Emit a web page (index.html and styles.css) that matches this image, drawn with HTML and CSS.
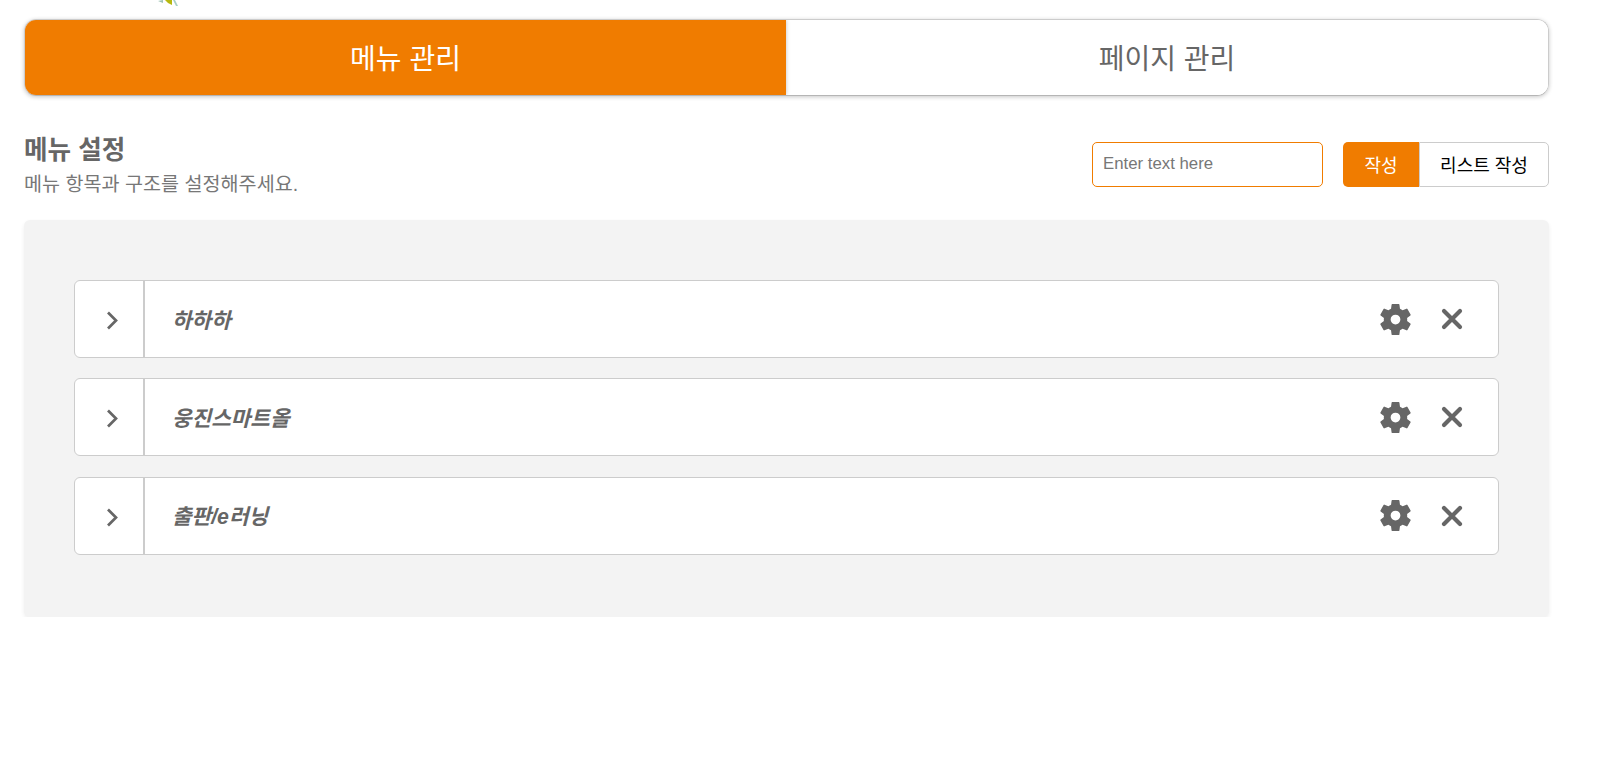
FILE: index.html
```html
<!DOCTYPE html>
<html lang="ko">
<head>
<meta charset="utf-8">
<title>메뉴 관리</title>
<link rel="stylesheet" href="styles.css">
</head>
<body>
<div class="page">
  <div class="logo-strip">
    <svg class="logo-bit" width="26" height="7" viewBox="0 0 26 7">
      <path d="M0 1 L5 0 L5 3 Z" fill="#9fc4b4"/>
      <path d="M7 0 H14 L14 5 L10 3 Z" fill="#b7b80f"/>
      <path d="M15 0 H17 L20 6 L18 6 Z" fill="#a9cfc5"/>
    </svg>
  </div>
  <div class="tabs">
    <button class="tab tab-active">메뉴 관리</button>
    <button class="tab">페이지 관리</button>
  </div>
  <div class="section-head">
    <div class="titles">
      <h2 class="title">메뉴 설정</h2>
      <p class="subtitle">메뉴 항목과 구조를 설정해주세요.</p>
    </div>
    <div class="actions">
      <input class="text-input" type="text" placeholder="Enter text here">
      <div class="btn-group">
        <button class="btn btn-primary">작성</button>
        <button class="btn btn-secondary">리스트 작성</button>
      </div>
    </div>
  </div>
  <div class="panel">
    <div class="row">
      <div class="row-toggle"><svg width="14" height="20" viewBox="0 0 14 20"><path d="M3 2.5 L11 10.5 L3 18.5" fill="none" stroke="#666" stroke-width="2.7"/></svg></div>
      <div class="row-label">하하하</div>
      <div class="row-icons">
        <svg class="gear" width="39" height="39" viewBox="0 0 24 24"><path fill="#666" fill-rule="evenodd" d="M19.14 12.94c.04-.3.06-.61.06-.94 0-.32-.02-.64-.07-.94l2.03-1.58a.49.49 0 0 0 .12-.61l-1.92-3.32a.49.49 0 0 0-.59-.22l-2.39.96c-.5-.38-1.03-.7-1.62-.94l-.36-2.54a.48.48 0 0 0-.48-.41h-3.84c-.24 0-.43.17-.47.41l-.36 2.54c-.59.24-1.13.57-1.62.94l-2.39-.96a.48.48 0 0 0-.59.22L2.74 8.87c-.12.21-.08.47.12.61l2.03 1.58c-.05.3-.09.63-.09.94s.02.64.07.94l-2.03 1.58a.49.49 0 0 0-.12.61l1.92 3.32c.12.22.37.29.59.22l2.39-.96c.5.38 1.03.7 1.62.94l.36 2.54c.05.24.24.41.48.41h3.84c.24 0 .44-.17.47-.41l.36-2.54c.59-.24 1.13-.56 1.62-.94l2.39.96c.22.08.47 0 .59-.22l1.92-3.32c.12-.22.07-.47-.12-.61l-2.01-1.58zM12 15A3 3 0 1 1 12 9a3 3 0 0 1 0 6z"/></svg>
        <svg class="close" width="24" height="24" viewBox="0 0 24 24"><path d="M4 4 L20 20 M20 4 L4 20" fill="none" stroke="#666" stroke-width="4.2" stroke-linecap="round"/></svg>
      </div>
    </div>
    <div class="row">
      <div class="row-toggle"><svg width="14" height="20" viewBox="0 0 14 20"><path d="M3 2.5 L11 10.5 L3 18.5" fill="none" stroke="#666" stroke-width="2.7"/></svg></div>
      <div class="row-label">웅진스마트올</div>
      <div class="row-icons">
        <svg class="gear" width="39" height="39" viewBox="0 0 24 24"><path fill="#666" fill-rule="evenodd" d="M19.14 12.94c.04-.3.06-.61.06-.94 0-.32-.02-.64-.07-.94l2.03-1.58a.49.49 0 0 0 .12-.61l-1.92-3.32a.49.49 0 0 0-.59-.22l-2.39.96c-.5-.38-1.03-.7-1.62-.94l-.36-2.54a.48.48 0 0 0-.48-.41h-3.84c-.24 0-.43.17-.47.41l-.36 2.54c-.59.24-1.13.57-1.62.94l-2.39-.96a.48.48 0 0 0-.59.22L2.74 8.87c-.12.21-.08.47.12.61l2.03 1.58c-.05.3-.09.63-.09.94s.02.64.07.94l-2.03 1.58a.49.49 0 0 0-.12.61l1.92 3.32c.12.22.37.29.59.22l2.39-.96c.5.38 1.03.7 1.62.94l.36 2.54c.05.24.24.41.48.41h3.84c.24 0 .44-.17.47-.41l.36-2.54c.59-.24 1.13-.56 1.62-.94l2.39.96c.22.08.47 0 .59-.22l1.92-3.32c.12-.22.07-.47-.12-.61l-2.01-1.58zM12 15A3 3 0 1 1 12 9a3 3 0 0 1 0 6z"/></svg>
        <svg class="close" width="24" height="24" viewBox="0 0 24 24"><path d="M4 4 L20 20 M20 4 L4 20" fill="none" stroke="#666" stroke-width="4.2" stroke-linecap="round"/></svg>
      </div>
    </div>
    <div class="row">
      <div class="row-toggle"><svg width="14" height="20" viewBox="0 0 14 20"><path d="M3 2.5 L11 10.5 L3 18.5" fill="none" stroke="#666" stroke-width="2.7"/></svg></div>
      <div class="row-label">출판/e러닝</div>
      <div class="row-icons">
        <svg class="gear" width="39" height="39" viewBox="0 0 24 24"><path fill="#666" fill-rule="evenodd" d="M19.14 12.94c.04-.3.06-.61.06-.94 0-.32-.02-.64-.07-.94l2.03-1.58a.49.49 0 0 0 .12-.61l-1.92-3.32a.49.49 0 0 0-.59-.22l-2.39.96c-.5-.38-1.03-.7-1.62-.94l-.36-2.54a.48.48 0 0 0-.48-.41h-3.84c-.24 0-.43.17-.47.41l-.36 2.54c-.59.24-1.13.57-1.62.94l-2.39-.96a.48.48 0 0 0-.59.22L2.74 8.87c-.12.21-.08.47.12.61l2.03 1.58c-.05.3-.09.63-.09.94s.02.64.07.94l-2.03 1.58a.49.49 0 0 0-.12.61l1.92 3.32c.12.22.37.29.59.22l2.39-.96c.5.38 1.03.7 1.62.94l.36 2.54c.05.24.24.41.48.41h3.84c.24 0 .44-.17.47-.41l.36-2.54c.59-.24 1.13-.56 1.62-.94l2.39.96c.22.08.47 0 .59-.22l1.92-3.32c.12-.22.07-.47-.12-.61l-2.01-1.58zM12 15A3 3 0 1 1 12 9a3 3 0 0 1 0 6z"/></svg>
        <svg class="close" width="24" height="24" viewBox="0 0 24 24"><path d="M4 4 L20 20 M20 4 L4 20" fill="none" stroke="#666" stroke-width="4.2" stroke-linecap="round"/></svg>
      </div>
    </div>
  </div>
</div>
</body>
</html>
```
FILE: styles.css
```css
* { box-sizing: border-box; }
html, body { margin: 0; padding: 0; background: #fff; }
body { font-family: "Liberation Sans", "Noto Sans CJK KR", sans-serif; color: #666; overflow: hidden; }
.page { width: 1525px; margin-left: 24px; }
.logo-strip { height: 19px; padding-left: 134px; }
.logo-bit { display: block; }
.tabs {
  display: flex; height: 77px; border: 1px solid #ccc; border-bottom-color: #b5b5b5; border-radius: 12px; overflow: hidden;
  box-shadow: 0 1px 4px rgba(0,0,0,.22);
}
.tab {
  flex: 1 1 0; border: 0; background: #fff; font: inherit; font-size: 28px; color: #666;
  padding: 0 0 1px; margin: 0;
}
.tab-active { flex: 0 0 761px; background: #f07c00; color: #fff; box-shadow: 0 0 4px rgba(0,0,0,.25); position: relative; }
.section-head { display: flex; justify-content: space-between; height: 124px; padding-top: 38px; }
.title { margin: 0 0 4px; font-size: 25.6px; line-height: 33px; font-weight: 700; color: #666; }
.subtitle { margin: 0; font-size: 19.6px; line-height: 26px; color: #777; }
.actions { display: flex; gap: 20px; padding-top: 8px; align-items: flex-start; }
.text-input {
  width: 231px; height: 45px; border: 1px solid #f07c00; border-radius: 5px; padding: 0 10px 2px;
  font: 16.8px "Liberation Sans", sans-serif; outline: 0; color: #333;
}
.text-input::placeholder { color: #777; opacity: 1; }
.btn-group { display: flex; height: 45px; }
.btn { font: inherit; font-size: 18px; padding: 0 0 2px; margin: 0; cursor: pointer; }
.btn-primary { width: 76px; background: #f07c00; color: #fff; border: 0; border-radius: 5px 0 0 5px; }
.btn-secondary { width: 130px; background: #fff; color: #000; border: 1px solid #ccc; border-radius: 0 5px 5px 0; }
.panel {
  background: #f3f3f3; border-radius: 6px; height: 397px; padding: 60px 50px;
  display: flex; flex-direction: column; gap: 20.4px; box-shadow: 0 2px 4px rgba(0,0,0,.07);
}
.row {
  display: flex; align-items: center; height: 78px; background: #fff; border: 1px solid #ccc; border-radius: 6px;
}
.row-toggle {
  width: 70px; height: 100%; border-right: 2px solid #ccc; display: flex; align-items: center; justify-content: center;
  padding: 2px 0 0 5px;
}
.row-label { flex: 1; padding: 0 0 2px 27px; font-size: 21.3px; font-weight: 700; font-style: italic; color: #666; }
.row-icons { display: flex; align-items: center; gap: 25px; padding-right: 34px; }
```
